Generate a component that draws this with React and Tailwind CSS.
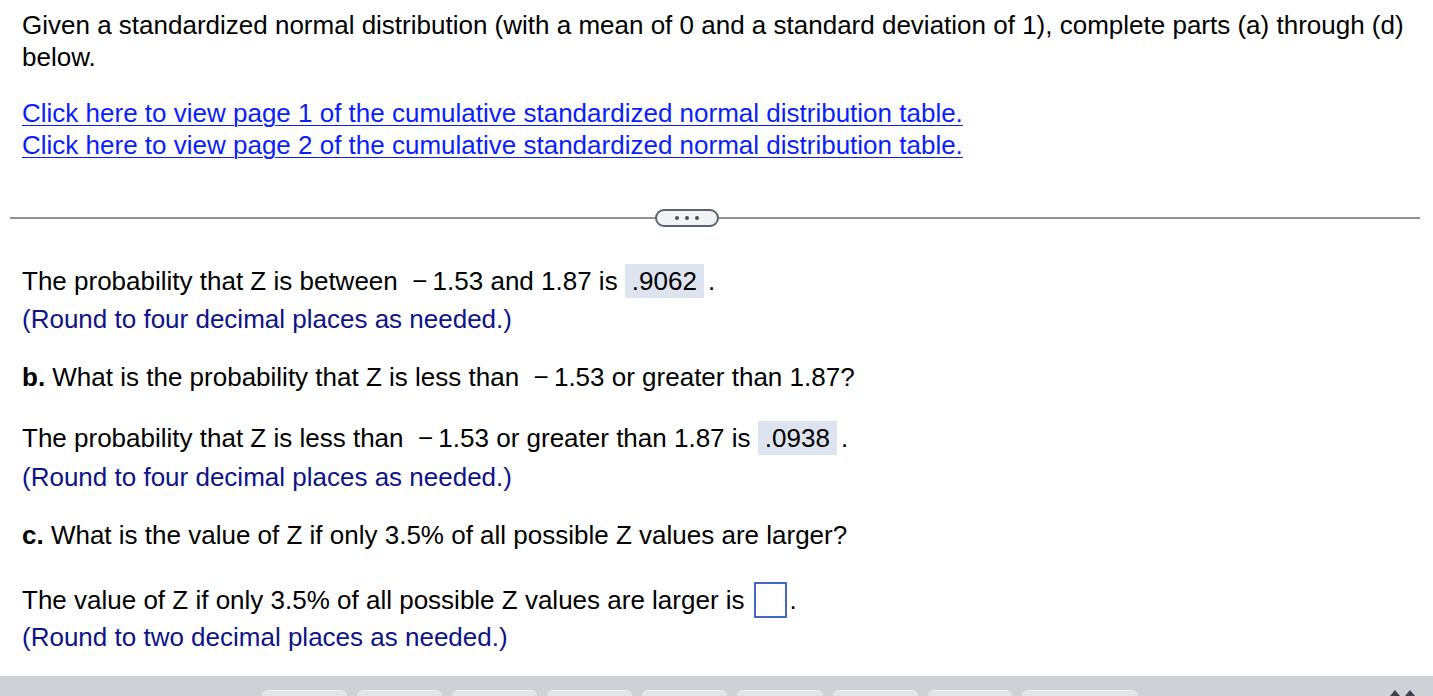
import React from 'react';

/**
 * Standard normal distribution question page
 */
const AnswerBox = ({ value }) => (
  <span className="inline-flex items-center h-[34px] px-[7px] bg-[#dde3ef]">{value}</span>
);

const Hint = ({ children }) => (
  <div className="h-[32px] flex items-center text-[#0c1488]">{children}</div>
);

const keys = [85, 85, 85, 85, 85, 86, 85, 84, 116];

const App = () => {
  return (
    <div className="w-[1433px] h-[696px] bg-white overflow-hidden flex flex-col text-black text-[26px] leading-[32px] font-['Liberation_Sans',Arial,sans-serif]">
      {/* Question header */}
      <div className="px-[22px] pt-[9px]">
        <p>
          Given a standardized normal distribution (with a mean of 0 and a standard deviation of 1), complete parts (a) through (d)
          below.
        </p>
        <div className="mt-[24px] flex flex-col items-start">
          <a href="#" className="text-[#0a1ef8] underline underline-offset-[3px] decoration-1">
            Click here to view page 1 of the cumulative standardized normal distribution table.
          </a>
          <a href="#" className="text-[#0a1ef8] underline underline-offset-[3px] decoration-1">
            Click here to view page 2 of the cumulative standardized normal distribution table.
          </a>
        </div>
      </div>

      {/* Divider */}
      <div className="mt-[48px] mx-[10px] w-[1410px] flex items-center">
        <div className="h-[2px] w-[645px] bg-[#8c919b]" />
        <div className="w-[64px] h-[18px] rounded-full border-2 border-[#5b6270] bg-[#f2f3f5] flex items-center justify-center gap-[6px]">
          <span className="w-[4px] h-[4px] rounded-full bg-[#4a505c]" />
          <span className="w-[4px] h-[4px] rounded-full bg-[#4a505c]" />
          <span className="w-[4px] h-[4px] rounded-full bg-[#4a505c]" />
        </div>
        <div className="h-[2px] flex-1 bg-[#8c919b]" />
      </div>

      {/* Answers */}
      <div className="px-[22px] mt-[37px] flex-1">
        <div className="h-[34px] flex items-center">
          <span>The probability that Z is between&nbsp; −&thinsp;1.53 and 1.87 is&nbsp;</span>
          <AnswerBox value=".9062" />
          <span className="ml-[4px]">.</span>
        </div>
        <div className="mt-[5px]">
          <Hint>(Round to four decimal places as needed.)</Hint>
        </div>

        <div className="mt-[26px] h-[32px] flex items-center">
          <span>
            <b>b.</b> What is the probability that Z is less than&nbsp; −&thinsp;1.53 or greater than 1.87?
          </span>
        </div>

        <div className="mt-[28px] h-[34px] flex items-center">
          <span>The probability that Z is less than&nbsp; −&thinsp;1.53 or greater than 1.87 is&nbsp;</span>
          <AnswerBox value=".0938" />
          <span className="ml-[4px]">.</span>
        </div>
        <div className="mt-[6px]">
          <Hint>(Round to four decimal places as needed.)</Hint>
        </div>

        <div className="mt-[26px] h-[32px] flex items-center">
          <span>
            <b>c.</b> What is the value of Z if only 3.5% of all possible Z values are larger?
          </span>
        </div>

        <div className="mt-[31px] h-[36px] flex items-center">
          <span>The value of Z if only 3.5% of all possible Z values are larger is</span>
          <span className="ml-[9px] w-[33px] h-[36px] border-2 border-[#4468c8] bg-white" />
          <span className="ml-[3px]">.</span>
        </div>
        <div className="mt-[3px]">
          <Hint>(Round to two decimal places as needed.)</Hint>
        </div>
      </div>

      {/* Bottom toolbar */}
      <div className="h-[20px] bg-[#d0d1d6] flex items-end pl-[262px] pr-[18px]">
        <div className="flex items-end gap-[10px] h-[6px]">
          {keys.map((w, i) => (
            <div
              key={i}
              style={{ width: w }}
              className="h-[6px] rounded-t-[6px] bg-[#e3e4e8] border-t border-[#eef0f2]"
            />
          ))}
        </div>
        <div className="ml-auto flex gap-[5px] h-[6px] items-end">
          <svg width="10" height="6" viewBox="0 0 10 6">
            <path d="M5 0 L10 6 L0 6 Z" fill="#3f424a" />
          </svg>
          <svg width="10" height="6" viewBox="0 0 10 6">
            <path d="M5 0 L10 6 L0 6 Z" fill="#3f424a" />
          </svg>
        </div>
      </div>
    </div>
  );
};

export default App;
